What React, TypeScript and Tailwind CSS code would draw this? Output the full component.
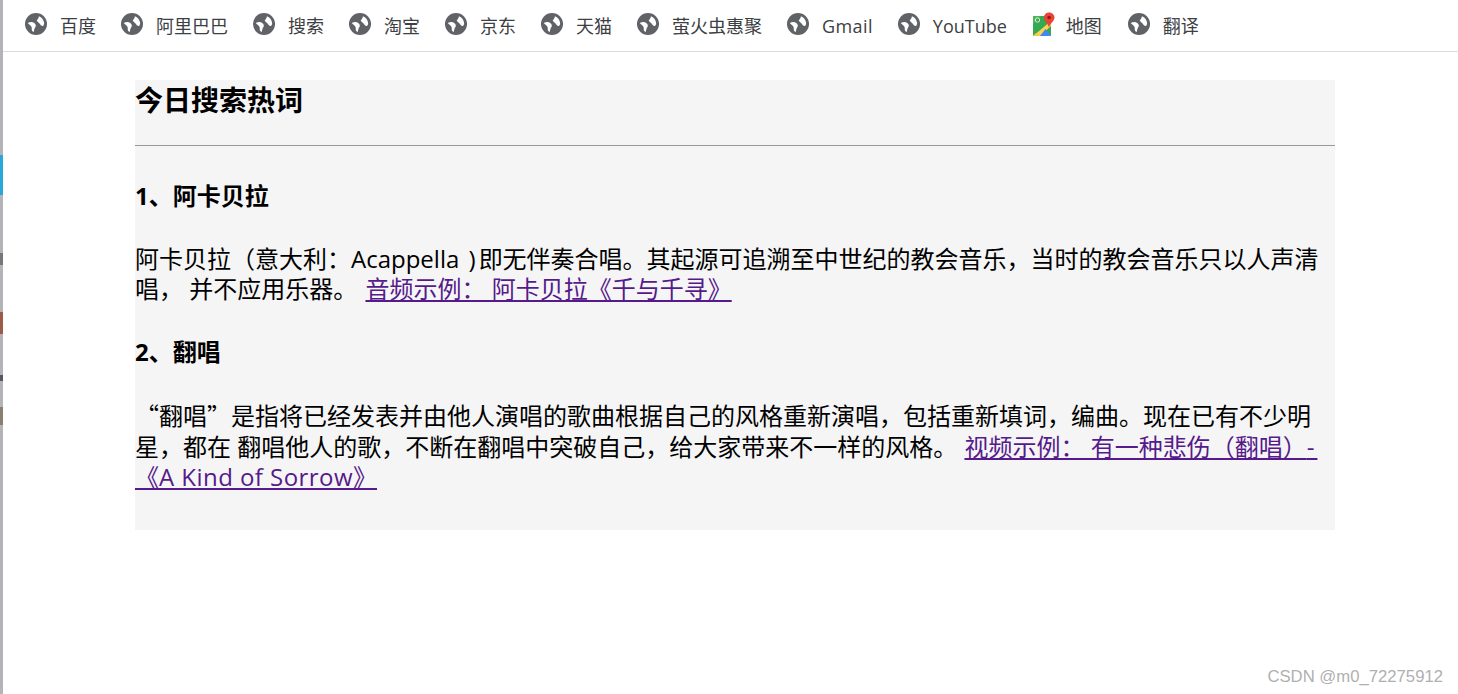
const font = "font-['Open_Sans','Noto_Sans_CJK_SC',sans-serif]";
const cjk = "font-['Noto_Sans_CJK_SC',sans-serif]";

const bookmarks = [
  { label: "百度" },
  { label: "阿里巴巴" },
  { label: "搜索" },
  { label: "淘宝" },
  { label: "京东" },
  { label: "天猫" },
  { label: "萤火虫惠聚" },
  { label: "Gmail", textClass: "tracking-[0.4px]" },
  { label: "YouTube" },
  { label: "地图", maps: true, itemClass: "pr-[1px]" },
  { label: "翻译" },
];

// slices of the window behind, seen down the left edge
const edgeStrip = [
  { h: "h-[155px]", bg: "bg-[#b4b4b8]" },
  { h: "h-[40px]", bg: "bg-[#28a8d8]" },
  { h: "h-[58px]", bg: "bg-[#b4b4b8]" },
  { h: "h-[12px]", bg: "bg-[#77777a]" },
  { h: "h-[47px]", bg: "bg-[#b4b4b8]" },
  { h: "h-[22px]", bg: "bg-[#9c5a48]" },
  { h: "h-[41px]", bg: "bg-[#b4b4b8]" },
  { h: "h-[6px]", bg: "bg-[#555566]" },
  { h: "h-[26px]", bg: "bg-[#b4b4b8]" },
  { h: "h-[18px]", bg: "bg-[#8a8070]" },
  { h: "flex-1", bg: "bg-[#b4b4b8]" },
];

function Globe() {
  return (
    <svg width="22" height="22" viewBox="0 0 24 24" className="shrink-0">
      <circle cx="12" cy="12" r="12" fill="#5f6368" />
      <path d="M3 11 C5.5 9.8 8 9.5 10 10.8 C12.2 12.2 12.2 14.2 11 15.8 C10 17.2 10 19 9.6 20.8 C8 20.2 7 19 7.4 17 C7.8 14.8 5.2 13.2 3 11 Z" fill="#ffffff" />
      <path d="M15.2 3.6 C18.2 4.6 20.4 7.4 20.9 11 C20.9 12.2 20.5 13.4 19.8 14.2 C18.6 14.6 17.4 13.8 16.5 12.4 C15.5 10.8 13.8 9.8 12.8 8.5 C13.4 6.8 15.2 5.8 15.2 3.6 Z" fill="#ffffff" />
    </svg>
  );
}

function MapsIcon() {
  return (
    <svg width="24" height="25" viewBox="0 0 24 25" className="shrink-0">
      <rect x="1" y="4" width="18" height="20" rx="1" fill="#34a853" />
      <path d="M1 4 H9 L1 12 Z" fill="#4fb35a" />
      <circle cx="5.5" cy="8" r="2.2" fill="none" stroke="#d5ecd0" strokeWidth="1" />
      <path d="M1 24 L19 9 L19 14 L8 24 Z" fill="#fbd34d" />
      <path d="M8 24 L13.5 17 L19 24 Z" fill="#4285f4" />
      <path d="M1 24 L4 21 L8 24 Z" fill="#f6c945" />
      <path d="M17 0.5 C14 0.5 12 2.8 12 5.5 C12 9 16 11.5 17 15.5 C18 11.5 22.5 9 22.5 5.5 C22.5 2.8 20 0.5 17 0.5 Z" fill="#ea4335" />
      <circle cx="17.1" cy="5.5" r="1.8" fill="#8c1c13" />
    </svg>
  );
}

export default function App() {
  return (
    <div className={`flex h-[694px] w-[1458px] overflow-hidden bg-white text-black ${font}`}>
      <div className="flex h-full w-[3px] shrink-0 flex-col">
        {edgeStrip.map((s, i) => (
          <div key={i} className={`${s.h} ${s.bg}`} />
        ))}
      </div>

      <div className="flex min-w-0 flex-1 flex-col">
        <nav className="flex h-[52px] shrink-0 items-center gap-[25px] border-b border-[#dadce0] pb-[3px] pl-[22px] text-[18px] text-[#3c4043]">
          {bookmarks.map((b) => (
            <div key={b.label} className={`flex items-center ${b.itemClass ?? ""}`}>
              {b.maps ? <MapsIcon /> : <Globe />}
              <span className={`${b.maps ? "ml-[10px]" : "ml-[13px]"} pt-[3px] leading-6 ${b.textClass ?? ""}`}>{b.label}</span>
            </div>
          ))}
        </nav>

        <main className="ml-[132px] mt-[28px] h-[450px] w-[1200px] shrink-0 bg-[#f5f5f5]">
          <h1 className="pt-[2px] text-[28px] font-bold leading-[36px]">今日搜索热词</h1>
          <hr className="mt-[27px] border-[#999999]" />
          <h2 className="mt-[34px] text-[24px] font-bold leading-[31px]">1、阿卡贝拉</h2>
          <p className="mt-[33px] text-[24px] leading-[30px]">
            阿卡贝拉（意大利：Acappella<span className="tracking-[3px]"> )</span>即无伴奏合唱。其起源可追溯至中世纪的教会音乐，当时的教会音乐只以人声清唱， 并不应用乐器。{" "}
            <a className="ml-[2px] text-[#551a8b] underline">音频示例： 阿卡贝拉《千与千寻》</a>
          </p>
          <h2 className="mt-[32px] text-[24px] font-bold leading-[31px]">2、翻唱</h2>
          <p className="mt-[33px] text-[24px] leading-[30.5px]">
            <span className={cjk}>“</span>翻唱<span className={cjk}>”</span>是指将已经发表并由他人演唱的歌曲根据自己的风格重新演唱，包括重新填词，编曲。现在已有不少明星，都在 翻唱他人的歌，不断在翻唱中突破自己，给大家带来不一样的风格。{" "}
            <a className="ml-[1px] text-[#551a8b] underline">
              视频示例： 有一种悲伤（翻唱）<span className="tracking-[3px]">-</span>《<span className="tracking-[0.45px]">A Kind of Sorrow</span>》
            </a>
          </p>
        </main>

        <div className="mt-auto self-end pb-[5px] pr-[15px] font-['Liberation_Sans',sans-serif] text-[16.7px] text-[#b0b0b0]">
          CSDN @m0_72275912
        </div>
      </div>
    </div>
  );
}
